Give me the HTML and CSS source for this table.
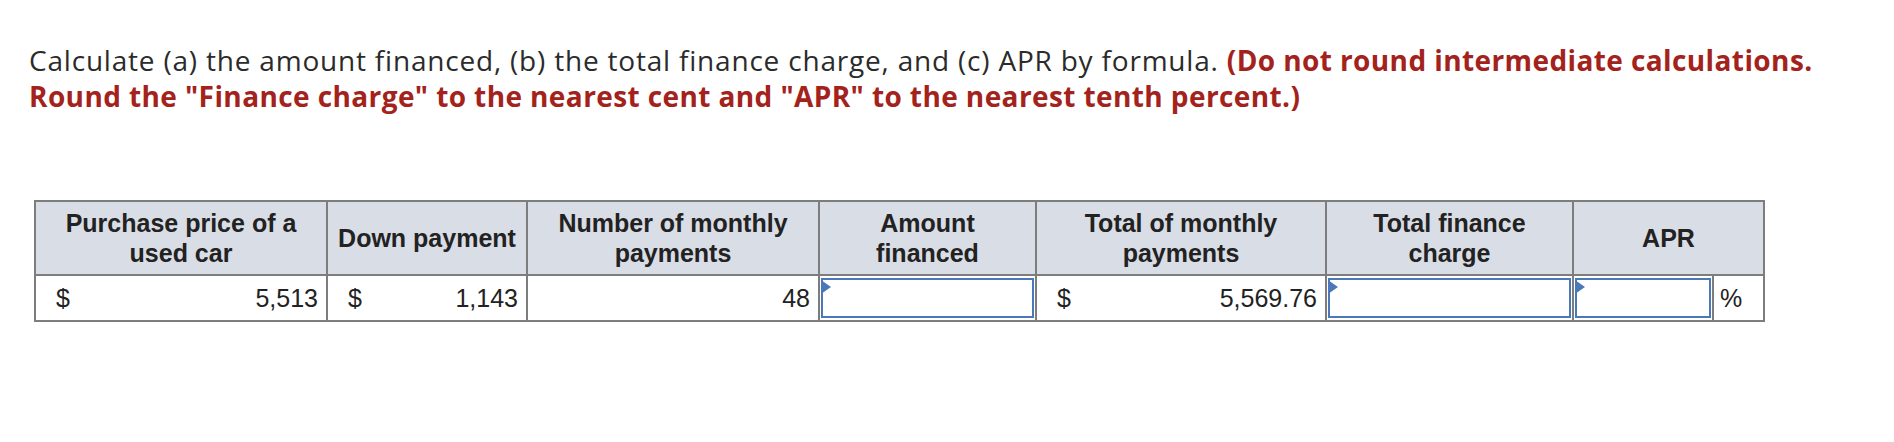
FILE: index.html
```html
<!DOCTYPE html>
<html lang="en">
<head>
<meta charset="utf-8">
<title>Finance charge</title>
<link rel="stylesheet" href="styles.css">
</head>
<body>
<div class="page">
  <p class="prompt">Calculate (a) the amount financed, (b) the total finance charge, and (c) APR by formula. <strong class="note">(Do not round intermediate calculations.<br>Round the "Finance charge" to the nearest cent and "APR" to the nearest tenth percent.)</strong></p>

  <table class="grid">
    <colgroup>
      <col class="c1"><col class="c2"><col class="c3"><col class="c4"><col class="c5"><col class="c6"><col class="c7"><col class="c8">
    </colgroup>
    <thead>
      <tr class="head-row">
        <th>Purchase price of a<br>used car</th>
        <th>Down payment</th>
        <th>Number of monthly<br>payments</th>
        <th>Amount<br>financed</th>
        <th>Total of monthly<br>payments</th>
        <th>Total finance<br>charge</th>
        <th colspan="2">APR</th>
      </tr>
    </thead>
    <tbody>
      <tr class="body-row">
        <td class="money"><div class="amount"><span>$</span><span>5,513</span></div></td>
        <td class="money"><div class="amount"><span>$</span><span>1,143</span></div></td>
        <td class="num">48</td>
        <td class="entry"><div class="field"><input type="text" aria-label="Amount financed"></div></td>
        <td class="money"><div class="amount"><span>$</span><span>5,569.76</span></div></td>
        <td class="entry"><div class="field"><input type="text" aria-label="Total finance charge"></div></td>
        <td class="entry"><div class="field"><input type="text" aria-label="APR"></div></td>
        <td class="unit">%</td>
      </tr>
    </tbody>
  </table>
</div>
</body>
</html>
```

FILE: styles.css
```css
html, body {
  margin: 0;
  padding: 0;
  background: #ffffff;
}

.page {
  padding: 42px 0 0 29px;
}

.prompt {
  margin: 0;
  font-family: "Open Sans", "Lato", sans-serif;
  font-size: 28px;
  line-height: 36px;
  letter-spacing: 0.8px;
  color: #2b2b2b;
}

.note {
  color: #a3231c;
  font-weight: 700;
  letter-spacing: 0.4px;
}

.grid {
  margin: 86px 0 0 5px;
  border-collapse: collapse;
  table-layout: fixed;
  width: 1731px;
  font-family: "Liberation Sans", Arial, sans-serif;
  font-size: 25px;
  color: #222222;
}

.c1 { width: 292px; }
.c2 { width: 200px; }
.c3 { width: 292px; }
.c4 { width: 217px; }
.c5 { width: 290px; }
.c6 { width: 247px; }
.c7 { width: 140px; }
.c8 { width: 51px; }

.grid th,
.grid td {
  border: 2px solid #7d7d7d;
  padding: 0;
}

.grid th {
  background: #d9dde5;
  font-weight: 700;
  line-height: 30px;
  text-align: center;
  vertical-align: middle;
}

.head-row th {
  height: 72px;
}

.body-row td {
  height: 42px;
  line-height: 30px;
  vertical-align: middle;
}

.grid td.money {
  padding: 0 8px 0 20px;
}

.amount {
  display: flex;
  justify-content: space-between;
  align-items: center;
}

.grid td.num {
  text-align: right;
  padding-right: 8px;
}

.grid td.entry {
  padding: 1px;
}

.field {
  position: relative;
}

.field input {
  display: block;
  box-sizing: border-box;
  width: 100%;
  height: 40px;
  margin: 0;
  border: 2px solid #4a78b8;
  background: #ffffff;
  font: inherit;
  outline: none;
}

.field::before {
  content: "";
  position: absolute;
  left: 0;
  top: 2px;
  width: 0;
  height: 0;
  border-top: 7px solid transparent;
  border-bottom: 7px solid transparent;
  border-left: 10px solid #4a78b8;
}

.grid td.unit {
  padding-left: 6px;
  text-align: left;
}
```
